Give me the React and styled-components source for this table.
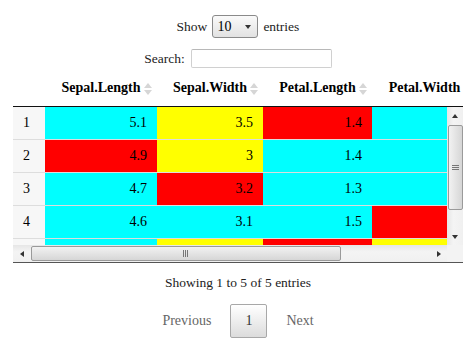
import React from "react";
import styled, { createGlobalStyle } from "styled-components";

const Global = createGlobalStyle`
  html, body { margin: 0; padding: 0; background: #fff; }
  body { font-family: "Liberation Serif", "Times New Roman", serif; color: #333; }
`;

const Wrapper = styled.div`
  width: 450px;
  margin-left: 13px;
  display: flex;
  flex-direction: column;
`;

const ControlRow = styled.div`
  display: flex;
  align-items: center;
  justify-content: center;
  gap: ${(p) => p.$gap || 5}px;
  margin-top: ${(p) => p.$mt}px;
  height: ${(p) => p.$h}px;
  font-size: 13.5px;
  color: #222;
`;

const SelectBox = styled.div`
  width: 46px;
  height: 23px;
  box-sizing: border-box;
  border: 1px solid #8a8a8a;
  border-radius: 3px;
  background: linear-gradient(#fafafa, #e2e2e2);
  display: flex;
  align-items: center;
  justify-content: space-between;
  padding: 0 6px 0 4px;
  font-size: 14px;
  color: #000;
`;

const SearchInput = styled.div`
  width: 141px;
  height: 19px;
  box-sizing: border-box;
  border: 1px solid #d0d0d0;
  border-top-color: #b8b8b8;
  border-radius: 2px;
  background: #fff;
`;

const HeadWrap = styled.div`
  margin-top: 2px;
  width: 450px;
  overflow: hidden;
  border-bottom: 1px solid #111;
`;

const Table = styled.table`
  table-layout: fixed;
  border-collapse: collapse;
  border-spacing: 0;
  width: 464px;
  font-size: 14px;
  color: #000;
`;

const Th = styled.th`
  position: relative;
  height: 36px;
  box-sizing: border-box;
  padding: 0 16px;
  text-align: center;
  font-weight: bold;
  line-height: 16px;
  white-space: nowrap;
`;

const SortIcon = styled.svg`
  position: absolute;
  right: 5px;
  top: 13px;
`;

const BodyGrid = styled.div`
  display: grid;
  grid-template-columns: 434px 16px;
  grid-template-rows: 138px 17px;
  border-bottom: 1px solid #555;
`;

const Viewport = styled.div`
  overflow: hidden;
`;

const Tr = styled.tr`
  & + & td { border-top: 1px solid #ddd; }
`;

const Td = styled.td`
  height: 32px;
  box-sizing: content-box;
  padding: 0 10px;
  line-height: 16px;
  background: ${(p) => p.$bg || "transparent"};
  text-align: ${(p) => (p.$left ? "left" : "right")};
  color: #000;
  white-space: nowrap;
`;

const VScroll = styled.div`
  display: grid;
  grid-template-rows: 17px 1fr 17px;
  background: linear-gradient(90deg, #e6e6e6, #f4f4f4 40%, #f0f0f0);
`;

const HScroll = styled.div`
  display: grid;
  grid-template-columns: 17px 1fr 17px;
  background: linear-gradient(#e6e6e6, #f4f4f4 40%, #f0f0f0);
`;

const Arrow = styled.div`
  display: flex;
  align-items: center;
  justify-content: center;
`;

const Track = styled.div`
  display: flex;
  flex-direction: ${(p) => (p.$vertical ? "column" : "row")};
  padding: ${(p) => (p.$vertical ? "1px 0" : "0 1px")};
`;

const Thumb = styled.div`
  box-sizing: border-box;
  ${(p) =>
    p.$vertical
      ? `height: 85px; width: 15px; margin-left: 1px; background: linear-gradient(90deg, #f2f2f2, #e4e4e4 50%, #d6d6d6);`
      : `width: 310px; height: 15px; margin-top: 1px; background: linear-gradient(#f2f2f2, #e4e4e4 50%, #d6d6d6);`}
  border: 1px solid #9a9a9a;
  border-radius: 2px;
  display: flex;
  align-items: center;
  justify-content: center;
`;

const Corner = styled.div`
  background: #f3f3f3;
`;

const Info = styled.div`
  text-align: center;
  font-size: 13.5px;
  color: #222;
  margin-top: 12px;
  line-height: 16px;
`;

const Pager = styled.div`
  display: flex;
  justify-content: center;
  align-items: center;
  margin-top: 13px;
  gap: 2px;
  font-size: 14px;
`;

const PageBtn = styled.div`
  box-sizing: border-box;
  height: 34px;
  padding: 0 ${(p) => (p.$current ? 14 : 16)}px;
  display: flex;
  align-items: center;
  border: 1px solid ${(p) => (p.$current ? "#a8a8a8" : "transparent")};
  border-radius: 2px;
  background: ${(p) => (p.$current ? "linear-gradient(#fff, #dcdcdc)" : "transparent")};
  color: ${(p) => (p.$current ? "#333" : "#666")};
`;

const Caret = ({ dir }) => {
  const pts = {
    up: "0,4 3,0 6,4",
    down: "0,0 6,0 3,4",
    left: "4,0 4,6 0,3",
    right: "0,0 0,6 4,3",
  }[dir];
  const horiz = dir === "left" || dir === "right";
  return (
    <svg width={horiz ? 4 : 6} height={horiz ? 6 : 4} viewBox={horiz ? "0 0 4 6" : "0 0 6 4"}>
      <polygon points={pts} fill="#333" />
    </svg>
  );
};

const Sort = () => (
  <SortIcon width="8" height="12" viewBox="0 0 8 12">
    <polygon points="0,5 4,0 8,5" fill="#d6d6d6" />
    <polygon points="0,7 8,7 4,12" fill="#d6d6d6" />
  </SortIcon>
);

const C = "#00ffff";
const Y = "#ffff00";
const R = "#ff0000";

const rows = [
  ["1", ["5.1", C], ["3.5", Y], ["1.4", R], ["0.2", C]],
  ["2", ["4.9", R], ["3", Y], ["1.4", C], ["0.2", C]],
  ["3", ["4.7", C], ["3.2", R], ["1.3", C], ["0.2", C]],
  ["4", ["4.6", C], ["3.1", C], ["1.5", C], ["0.2", R]],
  ["5", ["5", C], ["3.6", Y], ["1.4", R], ["0.2", Y]],
];

const widths = [32, 112, 106, 109, 105];

const Cols = () => (
  <colgroup>
    {widths.map((w, i) => (
      <col key={i} style={{ width: w }} />
    ))}
  </colgroup>
);

export default function App() {
  const heads = ["Sepal.Length", "Sepal.Width", "Petal.Length", "Petal.Width"];
  return (
    <>
      <Global />
      <Wrapper>
        <ControlRow $mt={15} $h={23}>
          <span>Show</span>
          <SelectBox>
            <span>10</span>
            <Caret dir="down" />
          </SelectBox>
          <span>entries</span>
        </ControlRow>
        <ControlRow $mt={11} $h={19} $gap={6}>
          <span>Search:</span>
          <SearchInput />
        </ControlRow>
        <HeadWrap>
          <Table>
            <Cols />
            <thead>
              <tr>
                <Th />
                {heads.map((h, i) => (
                  <Th key={h}>
                    {h}
                    {i < 3 && <Sort />}
                  </Th>
                ))}
              </tr>
            </thead>
          </Table>
        </HeadWrap>
        <BodyGrid>
          <Viewport>
            <Table>
              <Cols />
              <tbody>
                {rows.map((r) => (
                  <Tr key={r[0]}>
                    <Td $left $bg="#f7f7f7">{r[0]}</Td>
                    {r.slice(1).map(([v, bg], i) => (
                      <Td key={i} $bg={bg}>{v}</Td>
                    ))}
                  </Tr>
                ))}
              </tbody>
            </Table>
          </Viewport>
          <VScroll>
            <Arrow><Caret dir="up" /></Arrow>
            <Track $vertical>
              <Thumb $vertical>
                <svg width="7" height="6" viewBox="0 0 7 6">
                  <path d="M0 0.5H7M0 2.5H7M0 4.5H7" stroke="#777" strokeWidth="1" />
                </svg>
              </Thumb>
            </Track>
            <Arrow><Caret dir="down" /></Arrow>
          </VScroll>
          <HScroll>
            <Arrow><Caret dir="left" /></Arrow>
            <Track>
              <Thumb>
                <svg width="6" height="7" viewBox="0 0 6 7">
                  <path d="M0.5 0V7M2.5 0V7M4.5 0V7" stroke="#777" strokeWidth="1" />
                </svg>
              </Thumb>
            </Track>
            <Arrow><Caret dir="right" /></Arrow>
          </HScroll>
          <Corner />
        </BodyGrid>
        <Info>Showing 1 to 5 of 5 entries</Info>
        <Pager>
          <PageBtn>Previous</PageBtn>
          <PageBtn $current>1</PageBtn>
          <PageBtn>Next</PageBtn>
        </Pager>
      </Wrapper>
    </>
  );
}
